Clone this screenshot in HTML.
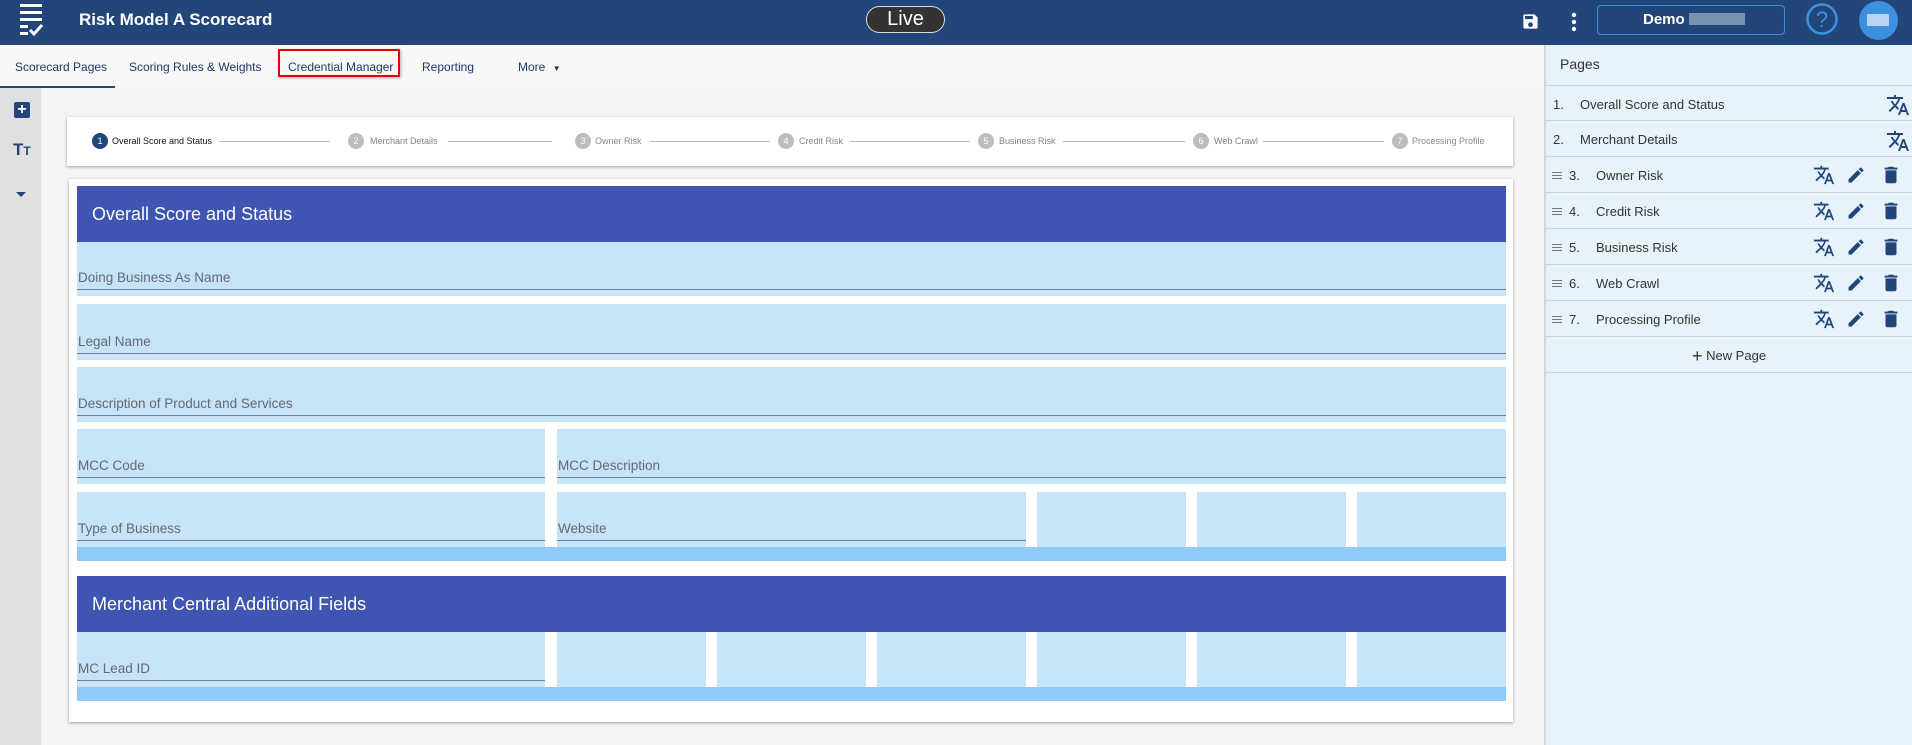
<!DOCTYPE html>
<html><head><meta charset="utf-8"><style>
*{box-sizing:border-box;margin:0;padding:0}
body{width:1912px;height:745px;overflow:hidden;background:#f4f4f4;font-family:"Liberation Sans",sans-serif;position:relative}
.a{position:absolute}
.top{left:0;top:0;width:1912px;height:45px;background:#22457a}
.tabs{left:0;top:45px;width:1544px;height:43px;background:#f8f8f8;font-size:12px;color:#1d3a66}
.tabs span{position:absolute;top:15px;white-space:nowrap}
.side{left:0;top:88px;width:41px;height:657px;background:#e0e0e0}
.card{background:#fff;box-shadow:0 1px 3px rgba(0,0,0,.35)}
.c{position:absolute;top:16px;width:16px;height:16px;border-radius:50%;background:#bdbdbd;color:#fff;font-size:9px;text-align:center;line-height:16px}
.lb{position:absolute;top:19px;font-size:9px;color:#8a8080;white-space:nowrap}
.ln{position:absolute;top:24px;height:1px;background:#bdbdbd}
.hd{background:#3f55b1;color:#fff;font-size:18px;padding-left:15px;display:flex;align-items:center}
.f{background:#c7e3f8}
.f b{position:absolute;left:0;right:0;bottom:6px;height:1px;background:#6e8296}
.f span{position:absolute;left:1px;bottom:11px;font-size:13.5px;color:#636a72}
.st{background:#90caf9}
.pn{left:1544px;top:45px;width:368px;height:700px;background:#e6f3fb;border-left:2px solid #d5d5d5}
.row{position:absolute;left:0;width:366px;height:36px;border-bottom:1.5px solid #c9d4dc;font-size:13px;color:#333}
.row span{position:absolute;top:11px}
.dr{position:absolute;left:6px;top:15px;width:10px;height:7px;border-top:1.5px solid #777;border-bottom:1.5px solid #777}
.dr:after{content:"";position:absolute;left:0;right:0;top:1.5px;height:1.5px;background:#777}
</style></head><body>
<div class="a top">
 <svg class="a" style="left:20px;top:4px" width="24" height="34" viewBox="0 0 24 34"><g fill="#fff"><rect x="0" y="0" width="22" height="3"/><rect x="0" y="7" width="22" height="3"/><rect x="0" y="14" width="22" height="3"/><rect x="0" y="21" width="8" height="3"/><rect x="0" y="28" width="8" height="3"/></g><path d="M10 26l4 4 8-9" stroke="#fff" stroke-width="3" fill="none"/></svg>
 <div class="a" style="left:79px;top:10px;color:#fff;font-size:17px;font-weight:bold">Risk Model A Scorecard</div>
 <div class="a" style="left:866px;top:6px;width:79px;height:27px;border-radius:14px;background:#333;border:1px solid #ddd;color:#fff;font-size:20px;text-align:center;line-height:25px">Live</div>
 <svg class="a" style="left:1521px;top:12px" width="19" height="19" viewBox="0 0 24 24"><path fill="#fff" d="M17 3H5a2 2 0 0 0-2 2v14a2 2 0 0 0 2 2h14a2 2 0 0 0 2-2V7l-4-4zm-5 16a3 3 0 1 1 0-6 3 3 0 0 1 0 6zm3-10H5V5h10v4z"/></svg>
 <svg class="a" style="left:1571px;top:12px" width="6" height="20"><circle cx="3" cy="3" r="2.2" fill="#fff"/><circle cx="3" cy="10" r="2.2" fill="#fff"/><circle cx="3" cy="17" r="2.2" fill="#fff"/></svg>
 <div class="a" style="left:1597px;top:5px;width:188px;height:30px;border:1.5px solid #3d8fe0;border-radius:4px;color:#fff;font-weight:bold;font-size:15px;padding-left:45px;line-height:27px">Demo <span style="display:inline-block;width:56px;height:12px;background:#9fb3c8;vertical-align:-1px;opacity:.7"></span></div>
 <svg class="a" style="left:1805px;top:2px" width="34" height="34" viewBox="0 0 34 34"><circle cx="17" cy="17" r="14.5" stroke="#3d8fe0" stroke-width="2.6" fill="none"/><text x="17" y="25" font-size="22" text-anchor="middle" fill="#3d8fe0" font-family="Liberation Sans">?</text></svg>
 <div class="a" style="left:1859px;top:1px;width:39px;height:39px;border-radius:50%;background:#3d8fe0"><div class="a" style="left:8px;top:13px;width:22px;height:12px;background:#b8d4f2"></div></div>
</div>
<div class="a tabs">
 <span style="left:15px">Scorecard Pages</span>
 <div class="a" style="left:0;top:41px;width:115px;height:2px;background:#22457a"></div>
 <span style="left:129px">Scoring Rules &amp; Weights</span>
 <div class="a" style="left:278px;top:4px;width:122px;height:28px;border:2px solid #e00;box-shadow:1px 1px 3px rgba(0,0,0,.3)"></div>
 <span style="left:288px">Credential Manager</span>
 <span style="left:422px">Reporting</span>
 <span style="left:518px">More <span style="position:static;font-size:8px;margin-left:4px">▼</span></span>
</div>
<div class="a side">
 <div class="a" style="left:14px;top:14px;width:16px;height:16px;background:#22457a;border-radius:2px;color:#fff;font-size:16px;line-height:15px;text-align:center;font-weight:bold">+</div>
 <div class="a" style="left:13px;top:52px;color:#22457a;font-weight:bold;font-size:17px">T<span style="font-size:12px">T</span></div>
 <div class="a" style="left:16px;top:104px;width:0;height:0;border-left:5px solid transparent;border-right:5px solid transparent;border-top:5px solid #22457a"></div>
</div>
<div class="a card" style="left:67px;top:117px;width:1446px;height:49px">
 <div class="c" style="left:25px;background:#22457a">1</div><div class="lb" style="left:45px;color:#111">Overall Score and Status</div>
 <div class="ln" style="left:152px;width:111px"></div>
 <div class="c" style="left:281px">2</div><div class="lb" style="left:303px">Merchant Details</div>
 <div class="ln" style="left:381px;width:104px"></div>
 <div class="c" style="left:508px">3</div><div class="lb" style="left:528px;color:#888">Owner Risk</div>
 <div class="ln" style="left:583px;width:120px"></div>
 <div class="c" style="left:711px">4</div><div class="lb" style="left:732px;color:#888">Credit Risk</div>
 <div class="ln" style="left:783px;width:120px"></div>
 <div class="c" style="left:911px">5</div><div class="lb" style="left:932px">Business Risk</div>
 <div class="ln" style="left:996px;width:122px"></div>
 <div class="c" style="left:1126px">6</div><div class="lb" style="left:1147px">Web Crawl</div>
 <div class="ln" style="left:1196px;width:121px"></div>
 <div class="c" style="left:1325px">7</div><div class="lb" style="left:1345px;color:#888">Processing Profile</div>
</div>
<div class="a card" style="left:69px;top:179px;width:1444px;height:543px"></div>
<div class="a hd" style="left:77px;top:186px;width:1429px;height:56px">Overall Score and Status</div>
<div class="a f" style="left:77px;top:242px;width:1429px;height:54px"><span>Doing Business As Name</span><b></b></div>
<div class="a f" style="left:77px;top:304px;width:1429px;height:56px"><span>Legal Name</span><b></b></div>
<div class="a f" style="left:77px;top:367px;width:1429px;height:55px"><span>Description of Product and Services</span><b></b></div>
<div class="a f" style="left:77px;top:429px;width:468px;height:55px"><span>MCC Code</span><b></b></div>
<div class="a f" style="left:557px;top:429px;width:949px;height:55px"><span>MCC Description</span><b></b></div>
<div class="a f" style="left:77px;top:492px;width:468px;height:55px"><span>Type of Business</span><b></b></div>
<div class="a f" style="left:557px;top:492px;width:469px;height:55px"><span>Website</span><b></b></div>
<div class="a f" style="left:1037px;top:492px;width:149px;height:55px"></div>
<div class="a f" style="left:1197px;top:492px;width:149px;height:55px"></div>
<div class="a f" style="left:1357px;top:492px;width:149px;height:55px"></div>
<div class="a st" style="left:77px;top:547px;width:1429px;height:14px"></div>
<div class="a hd" style="left:77px;top:576px;width:1429px;height:56px">Merchant Central Additional Fields</div>
<div class="a f" style="left:77px;top:632px;width:468px;height:55px"><span>MC Lead ID</span><b></b></div>
<div class="a f" style="left:557px;top:632px;width:149px;height:55px"></div>
<div class="a f" style="left:717px;top:632px;width:149px;height:55px"></div>
<div class="a f" style="left:877px;top:632px;width:149px;height:55px"></div>
<div class="a f" style="left:1037px;top:632px;width:149px;height:55px"></div>
<div class="a f" style="left:1197px;top:632px;width:149px;height:55px"></div>
<div class="a f" style="left:1357px;top:632px;width:149px;height:55px"></div>
<div class="a st" style="left:77px;top:687px;width:1429px;height:14px"></div>
<div class="a pn">
 <div class="a" style="left:14px;top:11px;font-size:14px;color:#333">Pages</div>
 <div class="row" style="top:40px;border-top:1.5px solid #c9d4dc"><span style="left:7px">1.</span><span style="left:34px">Overall Score and Status</span></div>
 <div class="row" style="top:76px"><span style="left:7px">2.</span><span style="left:34px">Merchant Details</span></div>
 <div class="row" style="top:112px"><i class="dr"></i><span style="left:23px">3.</span><span style="left:50px">Owner Risk</span></div>
 <div class="row" style="top:148px"><i class="dr"></i><span style="left:23px">4.</span><span style="left:50px">Credit Risk</span></div>
 <div class="row" style="top:184px"><i class="dr"></i><span style="left:23px">5.</span><span style="left:50px">Business Risk</span></div>
 <div class="row" style="top:220px"><i class="dr"></i><span style="left:23px">6.</span><span style="left:50px">Web Crawl</span></div>
 <div class="row" style="top:256px"><i class="dr"></i><span style="left:23px">7.</span><span style="left:50px">Processing Profile</span></div>
 <div class="row" style="top:292px;text-align:center"><span style="left:0;right:0;top:9px;font-size:13px"><b style="font-size:18px;font-weight:normal;vertical-align:-2px">+</b> New Page</span></div>
</div>
<svg width="0" height="0" style="position:absolute"><defs>
<symbol id="tr" viewBox="0 0 24 24"><path fill="#22457a" d="M12.87 15.07l-2.54-2.51.03-.03A17.5 17.5 0 0 0 14.07 6H17V4h-7V2H8v2H1v2h11.17C11.5 7.920 10.44 9.75 9 11.35 8.07 10.32 7.3 9.19 6.69 8h-2c.73 1.63 1.73 3.17 2.98 4.56l-5.09 5.02L4 19l5-5 3.11 3.110.76-2.04zM18.5 10h-2L12 22h2l1.12-3h4.75L21 22h2l-4.5-12zm-2.62 7l1.62-4.33L19.12 17h-3.24z"/></symbol>
<symbol id="pe" viewBox="0 0 24 24"><path fill="#22457a" d="M3 17.25V21h3.75L17.81 9.940l-3.75-3.75L3 17.25zM20.71 7.04a1 1 0 0 0 0-1.41l-2.34-2.34a1 1 0 0 0-1.41 0l-1.83 1.83 3.75 3.75 1.83-1.83z"/></symbol>
<symbol id="tb" viewBox="0 0 24 24"><path fill="#22457a" d="M6 19c0 1.1.9 2 2 2h8c1.1 0 2-.9 2-2V7H6v12zM19 4h-3.5l-1-1h-5l-1 1H5v2h14V4z"/></symbol>
</defs></svg>
<svg class="a" style="left:1886px;top:93px" width="24" height="24"><use href="#tr"/></svg>
<svg class="a" style="left:1886px;top:129px" width="24" height="24"><use href="#tr"/></svg>
<svg class="a" style="left:1813px;top:164px" width="22" height="22"><use href="#tr"/></svg><svg class="a" style="left:1846px;top:165px" width="20" height="20"><use href="#pe"/></svg><svg class="a" style="left:1880px;top:164px" width="22" height="22"><use href="#tb"/></svg>
<svg class="a" style="left:1813px;top:200px" width="22" height="22"><use href="#tr"/></svg><svg class="a" style="left:1846px;top:201px" width="20" height="20"><use href="#pe"/></svg><svg class="a" style="left:1880px;top:200px" width="22" height="22"><use href="#tb"/></svg>
<svg class="a" style="left:1813px;top:236px" width="22" height="22"><use href="#tr"/></svg><svg class="a" style="left:1846px;top:237px" width="20" height="20"><use href="#pe"/></svg><svg class="a" style="left:1880px;top:236px" width="22" height="22"><use href="#tb"/></svg>
<svg class="a" style="left:1813px;top:272px" width="22" height="22"><use href="#tr"/></svg><svg class="a" style="left:1846px;top:273px" width="20" height="20"><use href="#pe"/></svg><svg class="a" style="left:1880px;top:272px" width="22" height="22"><use href="#tb"/></svg>
<svg class="a" style="left:1813px;top:308px" width="22" height="22"><use href="#tr"/></svg><svg class="a" style="left:1846px;top:309px" width="20" height="20"><use href="#pe"/></svg><svg class="a" style="left:1880px;top:308px" width="22" height="22"><use href="#tb"/></svg>
</body></html>
